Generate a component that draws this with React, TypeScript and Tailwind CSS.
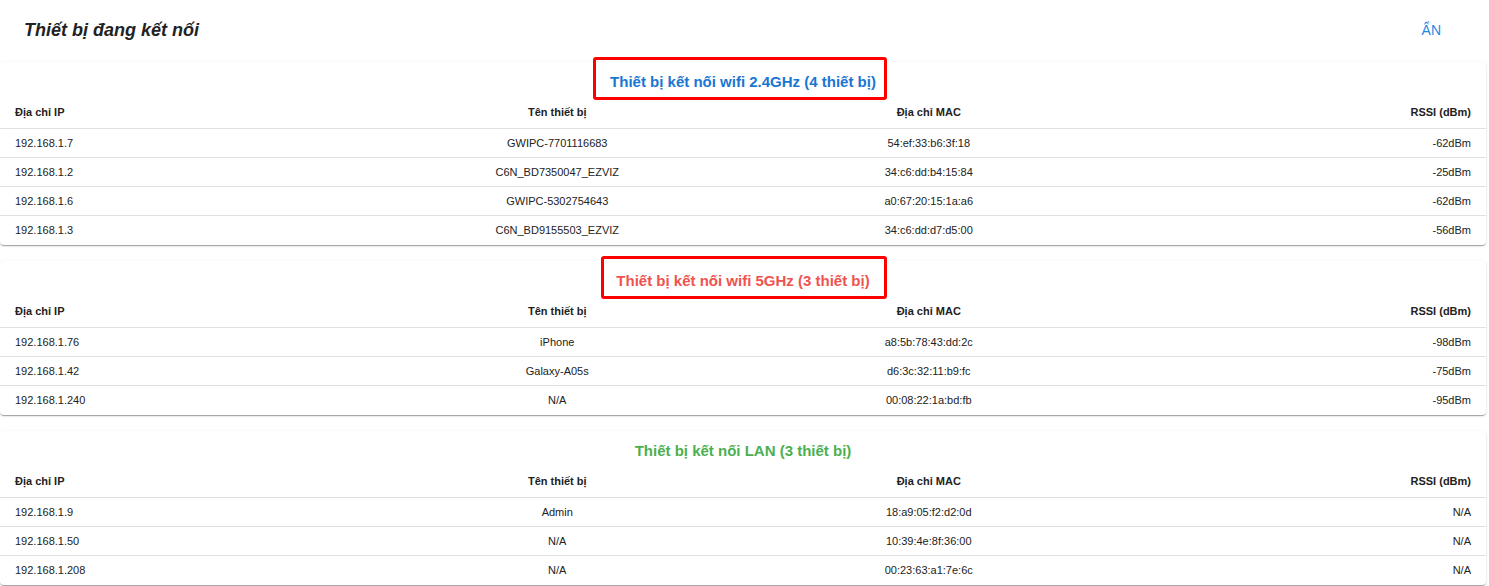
import { ReactNode } from "react";

type Device = {
  ip: string;
  name: string;
  mac: string;
  rssi: string;
};

const wifi24: Device[] = [
  { ip: "192.168.1.7", name: "GWIPC-7701116683", mac: "54:ef:33:b6:3f:18", rssi: "-62dBm" },
  { ip: "192.168.1.2", name: "C6N_BD7350047_EZVIZ", mac: "34:c6:dd:b4:15:84", rssi: "-25dBm" },
  { ip: "192.168.1.6", name: "GWIPC-5302754643", mac: "a0:67:20:15:1a:a6", rssi: "-62dBm" },
  { ip: "192.168.1.3", name: "C6N_BD9155503_EZVIZ", mac: "34:c6:dd:d7:d5:00", rssi: "-56dBm" },
];

const wifi5: Device[] = [
  { ip: "192.168.1.76", name: "iPhone", mac: "a8:5b:78:43:dd:2c", rssi: "-98dBm" },
  { ip: "192.168.1.42", name: "Galaxy-A05s", mac: "d6:3c:32:11:b9:fc", rssi: "-75dBm" },
  { ip: "192.168.1.240", name: "N/A", mac: "00:08:22:1a:bd:fb", rssi: "-95dBm" },
];

const lan: Device[] = [
  { ip: "192.168.1.9", name: "Admin", mac: "18:a9:05:f2:d2:0d", rssi: "N/A" },
  { ip: "192.168.1.50", name: "N/A", mac: "10:39:4e:8f:36:00", rssi: "N/A" },
  { ip: "192.168.1.208", name: "N/A", mac: "00:23:63:a1:7e:6c", rssi: "N/A" },
];

const DeviceCard = ({
  title,
  devices,
}: {
  title: ReactNode;
  devices: Device[];
}) => {
  return (
    <div className="mr-[3px] bg-white rounded shadow-[0_2px_1px_-1px_rgba(0,0,0,0.2),0_1px_1px_0_rgba(0,0,0,0.14),0_1px_3px_0_rgba(0,0,0,0.12)]">
      <div className="h-[29px] pt-[10px] flex justify-center">{title}</div>
      <div className="grid grid-cols-4 h-[38px] pt-[5px] items-center border-b border-[#e0e0e0] text-[11px] font-bold text-[#222]">
        <div className="px-[15px]">Địa chỉ IP</div>
        <div className="px-[15px] text-center">Tên thiết bị</div>
        <div className="px-[15px] text-center">Địa chỉ MAC</div>
        <div className="px-[15px] text-right">RSSI (dBm)</div>
      </div>
      {devices.map((d, i) => (
        <div
          key={d.ip}
          className={
            i < devices.length - 1
              ? "grid grid-cols-4 h-[29px] items-center border-b border-[#e0e0e0] text-[11px] text-[#222]"
              : "grid grid-cols-4 h-[29px] items-center text-[11px] text-[#222]"
          }
        >
          <div className="px-[15px]">{d.ip}</div>
          <div className="px-[15px] text-center">{d.name}</div>
          <div className="px-[15px] text-center">{d.mac}</div>
          <div className="px-[15px] text-right">{d.rssi}</div>
        </div>
      ))}
    </div>
  );
};

const App = () => {
  return (
    <div className="w-[1489px] min-h-[586px] bg-white font-['Liberation_Sans',Arial,sans-serif]">
      <div className="flex items-center justify-between h-[60px] pl-[24px] pr-[48px]">
        <p className="italic font-bold text-[18px] text-[#222]">Thiết bị đang kết nối</p>
        <button className="text-[14px] font-medium text-[#1e88e5] uppercase">Ẩn</button>
      </div>
      <div className="flex flex-col gap-[16px] pt-[2px]">
        <DeviceCard
          devices={wifi24}
          title={
            <span className="relative text-[15px] font-bold text-[#1976d2] leading-[20px]">
              Thiết bị kết nối wifi 2.4GHz (4 thiết bị)
              <span className="absolute left-[-17px] right-[-11px] top-[-15px] bottom-[-9px] border-[3px] border-[#ff0000] rounded-[3px]" />
            </span>
          }
        />
        <DeviceCard
          devices={wifi5}
          title={
            <span className="relative text-[15px] font-bold text-[#ef5350] leading-[20px]">
              Thiết bị kết nối wifi 5GHz (3 thiết bị)
              <span className="absolute left-[-15px] right-[-17px] top-[-15px] bottom-[-9px] border-[3px] border-[#ff0000] rounded-[3px]" />
            </span>
          }
        />
        <DeviceCard
          devices={lan}
          title={
            <span className="text-[15px] font-bold text-[#4caf50] leading-[20px]">
              Thiết bị kết nối LAN (3 thiết bị)
            </span>
          }
        />
      </div>
    </div>
  );
};

export default App;
